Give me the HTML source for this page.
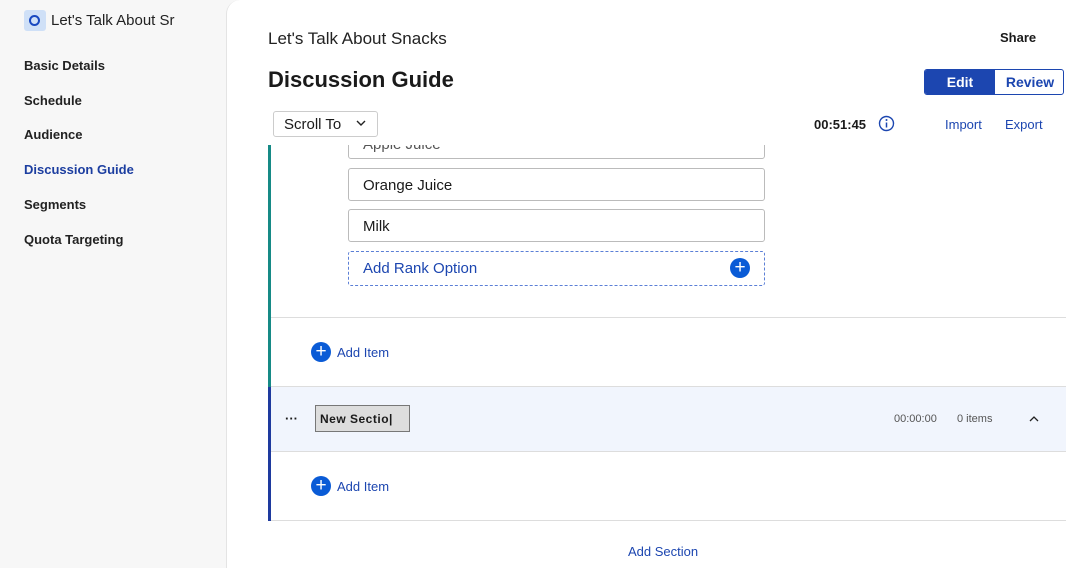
<!DOCTYPE html>
<html><head><meta charset="utf-8"><style>
*{margin:0;padding:0;box-sizing:border-box}
body{width:1066px;height:568px;overflow:hidden;background:#f7f7f7;font-family:"Liberation Sans",sans-serif;position:relative;color:#1a1a1a}
.a{position:absolute}
.nav{left:24px;font-size:13px;font-weight:bold;color:#222}
.main{left:226px;top:0;width:840px;height:568px;background:#fff;border-left:1px solid #e4e4e4;border-top-left-radius:14px}
.opt{left:348px;width:417px;height:33px;border:1px solid #bbb;border-radius:3px;background:#fff;font-size:15px;padding-left:14px;line-height:33px}
.plus{border-radius:50%;background:#0a5bd6;color:#fff;text-align:center}
.blue{color:#1c46b0}
</style></head><body>
<div class="a" style="left:24px;top:10px;width:22px;height:21px;background:#cfe0f7;border-radius:3px"></div>
<div class="a" style="left:29px;top:15px;width:11px;height:11px;border:2px solid #1848c0;border-radius:50%"></div>
<div class="a" style="left:51px;top:12px;font-size:15px;color:#222">Let's Talk About Sr</div>
<div class="a nav" style="top:58px">Basic Details</div>
<div class="a nav" style="top:93px">Schedule</div>
<div class="a nav" style="top:127px">Audience</div>
<div class="a nav" style="top:162px;color:#1c3ea0">Discussion Guide</div>
<div class="a nav" style="top:197px">Segments</div>
<div class="a nav" style="top:232px">Quota Targeting</div>
<div class="a main"></div>
<div class="a" style="left:268px;top:29px;font-size:17px;color:#222">Let's Talk About Snacks</div>
<div class="a" style="left:1000px;top:30px;font-size:13px;font-weight:bold">Share</div>
<div class="a" style="left:268px;top:67px;font-size:22px;font-weight:bold">Discussion Guide</div>
<div class="a" style="left:924px;top:69px;width:140px;height:26px;border:1px solid #1c46b0;border-radius:3px;overflow:hidden;font-size:14px;font-weight:bold">
<div class="a" style="left:0;top:0;width:70px;height:24px;background:#1c46b0;color:#fff;text-align:center;line-height:24px">Edit</div>
<div class="a" style="left:70px;top:0;width:70px;height:24px;color:#1c46b0;text-align:center;line-height:24px">Review</div></div>
<div class="a" style="left:273px;top:111px;width:105px;height:26px;border:1px solid #ccc;border-radius:3px;font-size:15px;line-height:25px;padding-left:10px">Scroll To</div>
<svg class="a" style="left:355px;top:119px" width="12" height="8" viewBox="0 0 12 8"><path d="M2 2l4 4 4-4" fill="none" stroke="#222" stroke-width="1.4"/></svg>
<div class="a" style="left:814px;top:117px;font-size:13px;font-weight:bold">00:51:45</div>
<svg class="a" style="left:878px;top:115px" width="17" height="17" viewBox="0 0 17 17"><circle cx="8.5" cy="8.5" r="7" fill="none" stroke="#1c46b0" stroke-width="1.4"/><circle cx="8.5" cy="5" r="1" fill="#1c46b0"/><path d="M8.5 7.5v5" stroke="#1c46b0" stroke-width="1.5"/></svg>
<div class="a blue" style="left:945px;top:117px;font-size:13px">Import</div>
<div class="a blue" style="left:1005px;top:117px;font-size:13px">Export</div>
<div class="a" style="left:268px;top:145px;width:3px;height:242px;background:#168a86"></div>
<div class="a" style="left:268px;top:387px;width:3px;height:134px;background:#1e3a9e"></div>
<div class="a opt" style="top:126px;color:#555;overflow:hidden;clip-path:inset(19px 0 0 0)"><span style="position:relative;top:1px">Apple Juice</span></div>
<div class="a opt" style="top:168px">Orange Juice</div>
<div class="a opt" style="top:209px">Milk</div>
<div class="a opt blue" style="top:251px;height:35px;border:1px dashed #5b7fd6">Add Rank Option</div>
<div class="a plus" style="left:730px;top:258px;width:20px;height:20px;font-size:19px;line-height:19px">+</div>
<div class="a" style="left:271px;top:317px;width:795px;height:1px;background:#ddd"></div>
<div class="a plus" style="left:311px;top:342px;width:20px;height:20px;font-size:19px;line-height:19px">+</div>
<div class="a blue" style="left:337px;top:345px;font-size:13px">Add Item</div>
<div class="a" style="left:271px;top:386px;width:795px;height:66px;background:#f1f5fd;border-top:1px solid #ddd;border-bottom:1px solid #ddd"></div>
<div class="a" style="left:285px;top:411px;font-size:13px;font-weight:bold">···</div>
<div class="a" style="left:315px;top:405px;width:95px;height:27px;background:#ddd;border:1px solid #777;font-size:12px;font-weight:bold;padding-left:4px;line-height:26px;letter-spacing:0.5px">New Sectio|</div>
<div class="a" style="left:894px;top:413px;font-size:11px;color:#555">00:00:00</div>
<div class="a" style="left:957px;top:413px;font-size:11px;color:#555">0 items</div>
<svg class="a" style="left:1028px;top:415px" width="12" height="8" viewBox="0 0 12 8"><path d="M2 6l4-4 4 4" fill="none" stroke="#222" stroke-width="1.3"/></svg>
<div class="a plus" style="left:311px;top:476px;width:20px;height:20px;font-size:19px;line-height:19px">+</div>
<div class="a blue" style="left:337px;top:479px;font-size:13px">Add Item</div>
<div class="a" style="left:271px;top:520px;width:795px;height:1px;background:#ddd"></div>
<div class="a blue" style="left:628px;top:544px;font-size:13px">Add Section</div>
</body></html>
